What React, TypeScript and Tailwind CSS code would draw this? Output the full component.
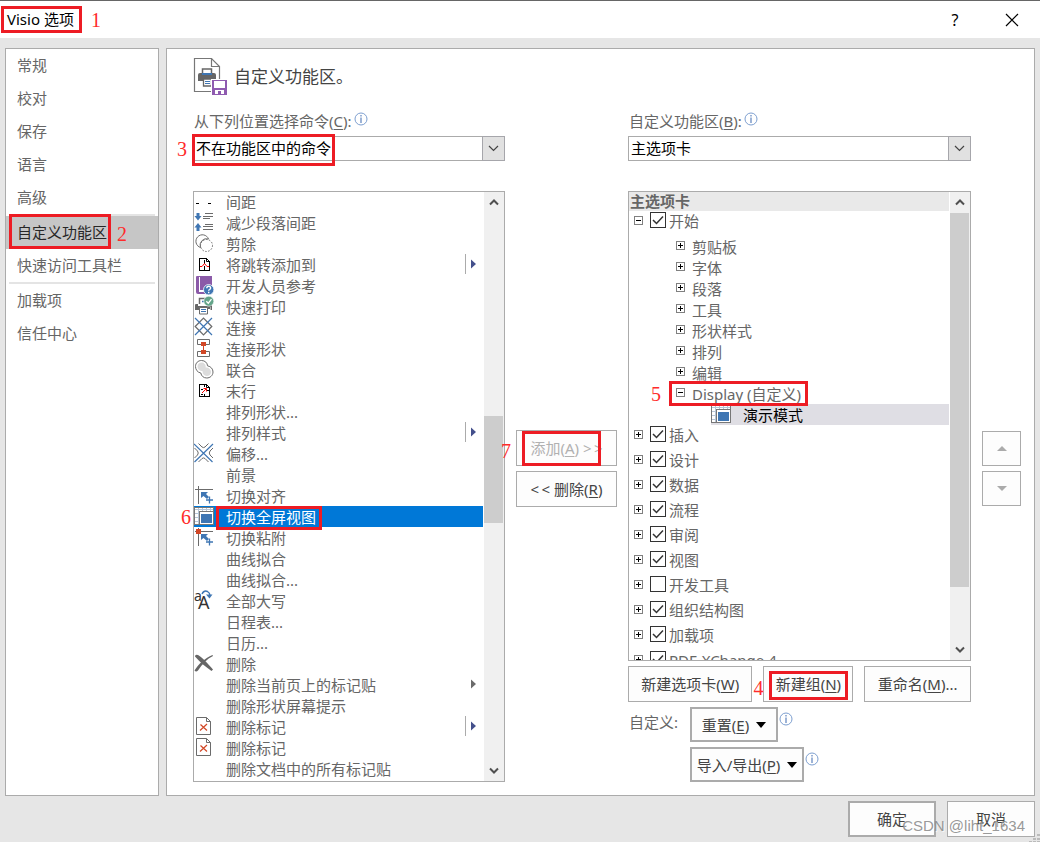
import React, { useState } from "react";

const GRAY = "#6b6b6b";
const BLUE = "#3f76b3";
const RED = "#d24726";

function Mark({ className }: { className: string }) {
  return <span aria-hidden="true" className={`pointer-events-none absolute z-10 border-3 border-[#ed1c24] ${className}`} />;
}

function Num({ n, className }: { n: number; className: string }) {
  return (
    <span
      className={`pointer-events-none absolute z-10 font-['Liberation_Serif',serif] text-[20px] leading-5 text-[#ff2b2b] ${className}`}
    >
      {n}
    </span>
  );
}

function Info() {
  return (
    <svg width="14" height="14" viewBox="0 0 14 14" className="shrink-0">
      <circle cx="7" cy="7" r="6" fill="#fff" stroke="#7d9fd0" strokeWidth="1" />
      <path d="M7 3v1.500M7 5.500v5.500" stroke="#5d82bd" strokeWidth="1.200" />
    </svg>
  );
}

function ScreenIcon() {
  return (
    <svg width="20" height="21" viewBox="0 0 20 21">
      <rect x="0" y="1" width="20" height="18" fill="#fff" />
      <path d="M4.500 2v16M8.500 2v4M12.500 2v4M16.500 2v4M1 3.500h18M1 7.500h4M1 11.500h4M1 15.500h4" stroke="#b7c6d8" fill="none" />
      <path d="M0.500 1v18M0 18.500h20M0 1.500h20M19.500 1v18" stroke="#777" fill="none" />
      <rect x="5.500" y="5.500" width="14" height="13" fill="#fff" stroke="#777" />
      <rect x="7" y="8" width="11" height="9" fill={BLUE} />
    </svg>
  );
}

function SnapArrow() {
  return (
    <>
      <path d="M1 4.500h18M4.500 1v18" stroke={GRAY} fill="none" />
      <path d="M7 7h7l-2 2 3 3-2 2-3.500-3-2.500 2z" fill={BLUE} />
      <path d="M15.500 11.500v7M12 15h7" stroke={BLUE} strokeWidth="1.300" />
    </>
  );
}

function BlackPage({ children }: { children: React.ReactNode }) {
  return (
    <>
      <path d="M5.500 4.500h7l3 3v9h-10z" fill="#fff" stroke="#000" shapeRendering="crispEdges" />
      <path d="M12.500 4.500v3h3" fill="none" stroke="#000" />
      {children}
    </>
  );
}

function Glyph({ kind }: { kind: string }) {
  const body = () => {
    switch (kind) {
      case "dash":
        return <path d="M2 12.500h3M14 12.500h3" stroke="#000" />;
      case "spacing":
        return (
          <>
            <path d="M2.500 1h3v3h2L4 8.500.500 4h2zM2.500 19h3v-3.500h2L4 11 .500 15.500h2z" fill={BLUE} />
            <path d="M11 1.500h8M9 4.500h10M9 6.500h7M11 12.500h8M9 14.500h10M9 17.500h10" stroke={GRAY} />
          </>
        );
      case "cut":
        return (
          <>
            <path d="M6.500 14.500A6.500 6.500 0 1 1 14.500 6A6.500 6.500 0 0 0 6.500 14.500z" fill="#fff" stroke={GRAY} />
            <circle cx="12.500" cy="12.500" r="6" fill="none" stroke={GRAY} strokeDasharray="1.500 1.500" />
          </>
        );
      case "jump":
        return (
          <BlackPage>
            <path d="M10.500 6v4M10.500 12v4" stroke="#000" />
            <path d="M6 12.500h2l2.500-3 2.500 3h2" stroke="#f00" fill="none" />
          </BlackPage>
        );
      case "line":
        return (
          <BlackPage>
            <path d="M7 9.500h2M7 14.500h2M10.500 5v2M10.500 14v2M13 10.500h2" stroke="#000" />
            <path d="M8 13l4-4M9.500 8.500h3v3" stroke="#f00" fill="none" />
          </BlackPage>
        );
      case "book":
        return (
          <>
            <path d="M2 2q0-1 1-1h15v14H5v2h7v2H4q-2 0-2-2z" fill="#8b5aa8" />
            <path d="M5.500 2v13" stroke="#fff" />
            <circle cx="14.700" cy="14.700" r="5.200" fill={BLUE} stroke="#fff" strokeWidth="0.800" />
            <path d="M12.800 13.200q0-1.900 1.900-1.900t1.900 1.600q0 1-1 1.600-.900.500-.900 1.300M14.700 16.800v1.400" fill="none" stroke="#fff" strokeWidth="1.400" />
          </>
        );
      case "print":
        return (
          <>
            <path d="M5.500 8V2.500h6V8" fill="#fff" stroke={GRAY} strokeWidth="1.500" />
            <path d="M8 5.500h4" stroke={BLUE} strokeWidth="1.500" />
            <path d="M1 9q0-1 1-1h2v2h10V8h3q1 0 1 1v5h-1.500v-3h-11v3H1z" fill="#666" />
            <path d="M3 10h13v3H3z" fill="#666" />
            <path d="M5.500 11.500h8v6.500h-8z" fill="#fff" stroke={GRAY} />
            <path d="M7 13.500h5M7 15.500h5" stroke={BLUE} />
            <circle cx="14.800" cy="5.200" r="5" fill="#63a489" stroke="#fff" strokeWidth="0.600" />
            <path d="M12.300 5.200l2 2 3.200-4" stroke="#fff" fill="none" strokeWidth="1.300" />
          </>
        );
      case "lattice":
        return (
          <>
            <path d="M1 5.500L5.250 1.250 14 9.500M1.200 9.500L9.500 1.200l8.300 8.300-8.300 8.300z" fill="none" stroke="none" />
            <path d="M1.200 9.500l4-4 4.300-4.300 4.300 4.300 4 4-4 4-4.300 4.300-4.300-4.300z" fill="none" stroke={GRAY} strokeWidth="1.200" />
            <path d="M1 1l17 17M18 1L1 18" stroke={BLUE} strokeWidth="1.200" />
          </>
        );
      case "connect":
        return (
          <>
            <path d="M3.500 1.500h12v5h-12zM3.500 13.500h12v5h-12z" fill="#fff" stroke={GRAY} />
            <path d="M9.500 5v10" stroke={RED} />
            <path d="M7 4h5v4H7zM7 12h5v4H7z" fill={RED} />
          </>
        );
      case "union":
        return (
          <>
            <path d="M7.500 1.500C11 1.500 13.500 4 13.500 6.800C17 7.500 19 10 19 13C19 16.500 16 19 12.800 19C9.500 19 7.300 17 6.800 14C3.500 13.500 1.500 10.500 1.500 7.500C1.500 4 4 1.500 7.500 1.500z" fill="#fff" stroke={GRAY} />
            <path d="M7.500 3.500C10 3.500 12 5.500 11.700 8.500C15 8.500 17 10.500 17 13C17 15.500 15 17 12.800 17C10 17 8.500 15 8.600 12.300C5.500 12 3.500 10 3.500 7.500C3.500 5 5.500 3.500 7.500 3.500z" fill="#dcdcdc" />
          </>
        );
      case "offset":
        return (
          <>
            <path d="M0 1l18.500 18M19 1L0.500 19" stroke={BLUE} strokeWidth="1.200" />
            <path d="M4.500 0.500l3.500 3.500q1.500 1.200 3 0L14.500 0.500M4.500 19l3.500-3.500q1.500-1.200 3 0l3.500 3.500M0.500 5l3 3q1.500 2 0 4l-3 3M19 5l-3 3q-1.500 2 0 4l3 3" fill="none" stroke={GRAY} />
          </>
        );
      case "snap":
        return <SnapArrow />;
      case "glue":
        return (
          <>
            <SnapArrow />
            <path d="M2 2h5v5H2z" fill={RED} />
          </>
        );
      case "caps":
        return (
          <>
            <text x="0" y="11" fontSize="14" fill="#333">a</text>
            <text x="4" y="19" fontSize="18" fill="#333">A</text>
            <path d="M8 4q2-4 5.500-2.500 2.500 1.500 2.500 4" fill="none" stroke={BLUE} strokeWidth="1.400" />
            <path d="M12 4.500h6.500L15.500 8.500z" fill={BLUE} />
          </>
        );
      case "delete":
        return (
          <path d="M1 3.500Q1 1 4 2C8 4.500 13 9.500 19 16.500L17.500 18C11 13.500 6 9 1 3.500zM19 3C13 6 8 11 4 17.500Q2 19.500.500 17.500C5 10.500 11 5 18.500 2z" fill="#666" />
        );
      case "xpage":
        return (
          <>
            <path d="M2.500 1.500h10l4 4v13h-14z" fill="#fff" stroke={GRAY} />
            <path d="M12.500 1.500v4h4" fill="none" stroke={GRAY} />
            <path d="M6.500 8.500l6.500 6M13 8l-7 6.500" stroke={RED} strokeWidth="1.200" />
          </>
        );
      default:
        return null;
    }
  };
  return (
    <svg width="20" height="21" viewBox="0 0 20 21" className="font-['Noto_Sans',sans-serif]">
      {body()}
    </svg>
  );
}

type Command = { text: string; icon?: string; sub?: "split" | "menu" };

const commands: Command[] = [
  { text: "间距", icon: "dash" },
  { text: "减少段落间距", icon: "spacing" },
  { text: "剪除", icon: "cut" },
  { text: "将跳转添加到", icon: "jump", sub: "split" },
  { text: "开发人员参考", icon: "book" },
  { text: "快速打印", icon: "print" },
  { text: "连接", icon: "lattice" },
  { text: "连接形状", icon: "connect" },
  { text: "联合", icon: "union" },
  { text: "末行", icon: "line" },
  { text: "排列形状..." },
  { text: "排列样式", sub: "split" },
  { text: "偏移...", icon: "offset" },
  { text: "前景" },
  { text: "切换对齐", icon: "snap" },
  { text: "切换全屏视图", icon: "screen" },
  { text: "切换粘附", icon: "glue" },
  { text: "曲线拟合" },
  { text: "曲线拟合..." },
  { text: "全部大写", icon: "caps" },
  { text: "日程表..." },
  { text: "日历..." },
  { text: "删除", icon: "delete" },
  { text: "删除当前页上的标记贴", sub: "menu" },
  { text: "删除形状屏幕提示" },
  { text: "删除标记", icon: "xpage", sub: "split" },
  { text: "删除标记", icon: "xpage" },
  { text: "删除文档中的所有标记贴" },
];

const groups = ["剪贴板", "字体", "段落", "工具", "形状样式", "排列", "编辑"];
const tabs = ["插入", "设计", "数据", "流程", "审阅", "视图", "开发工具", "组织结构图", "加载项", "PDF-XChange 4"];

function Scrollbar({ children }: { children: React.ReactNode }) {
  return (
    <div className="flex w-5 shrink-0 flex-col bg-[#f0f0f0] pr-px">
      <button aria-label="向上滚动" className="flex h-[21px] shrink-0 items-center justify-center">
        <svg width="10" height="7" viewBox="0 0 10 7"><path d="M1 5.500l4-4 4 4" fill="none" stroke="#505050" strokeWidth="2" /></svg>
      </button>
      <div className="flex min-h-0 flex-1 flex-col">{children}</div>
      <button aria-label="向下滚动" className="flex h-[21px] shrink-0 items-center justify-center">
        <svg width="10" height="7" viewBox="0 0 10 7"><path d="M1 1.500l4 4 4-4" fill="none" stroke="#505050" strokeWidth="2" /></svg>
      </button>
    </div>
  );
}

function Expander({ open }: { open?: boolean }) {
  return (
    <button aria-label={open ? "折叠" : "展开"} className="mt-[5px] block size-[9px] shrink-0">
      <svg width="9" height="9" viewBox="0 0 9 9">
        <rect x="0.500" y="0.500" width="8" height="8" fill="#fff" stroke="#808080" />
        <path d={open ? "M2 4.500h5" : "M2 4.500h5M4.500 2v5"} stroke="#000" />
      </svg>
    </button>
  );
}

function TabRow({ text, open }: { text: string; open?: boolean }) {
  const [on, setOn] = useState(text !== "开发工具");
  return (
    <div className="flex h-[25px] items-start pl-[5px]">
      <Expander open={open} />
      <label className="ml-[7px] flex items-start">
        <span className="relative mt-px block size-4">
          <input
            type="checkbox"
            checked={on}
            onChange={() => setOn(!on)}
            className="block size-4 appearance-none border border-[#333] bg-white"
          />
          {on && (
            <svg width="16" height="16" viewBox="0 0 16 16" className="pointer-events-none absolute inset-0">
              <path d="M3 8l3.500 3.500L13 4.500" fill="none" stroke="#333" strokeWidth="1.500" />
            </svg>
          )}
        </span>
        <span className="ml-[3px] leading-[21px] whitespace-nowrap">{text}</span>
      </label>
    </div>
  );
}

function Combo({ id, value }: { id: string; value: string }) {
  return (
    <div className="relative">
      <select id={id} className="block h-[25px] w-full appearance-none border border-[#ababab] bg-white pr-6 pb-[2px] pl-[2px] leading-5 text-black">
        <option>{value}</option>
      </select>
      <span className="pointer-events-none absolute inset-y-0 right-0 flex w-[23px] items-center justify-center border border-[#a6a6ab] bg-[#e1e1e1]">
        <svg width="11" height="7" viewBox="0 0 11 7"><path d="M1 1l4.500 4.500L10 1" fill="none" stroke="#444" strokeWidth="1.200" /></svg>
      </span>
    </div>
  );
}

function Btn({ children, className }: { children: React.ReactNode; className: string }) {
  return (
    <button className={`flex items-center justify-center border-[#ababab] bg-[#fdfdfd] whitespace-nowrap text-[#444] ${className}`}>
      {children}
    </button>
  );
}

function Key({ k }: { k: string }) {
  return <span>(<u className="underline-offset-2">{k}</u>)</span>;
}

function NavItem({ text, selected }: { text: string; selected?: boolean }) {
  return (
    <a
      href="#"
      className={selected ? "block bg-[#c6c6c6] pl-[11px] leading-[33px] text-[#262626]" : "block pl-[11px] leading-[33px]"}
    >
      {text}
    </a>
  );
}

export default function App() {
  return (
    <div className="flex min-h-screen flex-col bg-[#e6e6e6] font-['Noto_Sans','Noto_Sans_CJK_SC',sans-serif] text-[15px] leading-5 text-[#666]">
      <header className="flex h-[38px] items-center border-t border-[#666] bg-white pr-[21px] text-black">
        <div className="relative pl-[7px]">
          <h1 className="pb-[2px]">Visio 选项</h1>
          <Mark className="-top-[3px] left-px h-[27px] w-[81px]" />
          <Num n={1} className="top-px left-[91px]" />
        </div>
        <button aria-label="帮助" className="ml-auto w-5 text-[16px]">?</button>
        <button aria-label="关闭" className="ml-10">
          <svg width="14" height="14" viewBox="0 0 14 14"><path d="M1 1l12 12M13 1L1 13" stroke="#000" strokeWidth="1.200" /></svg>
        </button>
      </header>

      <div className="flex flex-1 gap-[7px] px-[5px] pt-[10px]">
        <nav className="relative w-[154px] shrink-0 border border-[#ababab] bg-white">
          <NavItem text="常规" />
          <NavItem text="校对" />
          <NavItem text="保存" />
          <NavItem text="语言" />
          <NavItem text="高级" />
          <hr className="mx-[3px] border-t-2 border-[#e4e4e4]" />
          <div className="relative">
            <NavItem text="自定义功能区" selected />
            <Mark className="-top-[2px] left-[3px] h-[35px] w-[102px]" />
            <Num n={2} className="top-2 left-[111px]" />
          </div>
          <NavItem text="快速访问工具栏" />
          <hr className="mx-[3px] border-t-2 border-[#e4e4e4]" />
          <NavItem text="加载项" />
          <NavItem text="信任中心" />
        </nav>

        <main className="min-w-0 flex-1 border border-[#ababab] bg-white pt-2 pr-[13px] pb-[13px] pl-[26px]">
          <div className="flex h-[52px] items-start gap-[5px]">
            <svg width="36" height="40" viewBox="0 0 36 40">
              <path d="M1.500 1.500h17l8 8v25h-25z" fill="#fff" stroke="#777" strokeWidth="1.200" />
              <path d="M18.500 1.500v8h8" fill="none" stroke="#777" strokeWidth="1.200" />
              <path d="M5 18q0-2 2-2h14q2 0 2 2v6H5z" fill="#666" />
              <path d="M9.500 18v-6h9v6z" fill="#fff" stroke="#666" strokeWidth="1.500" />
              <path d="M9 17h10" stroke={BLUE} strokeWidth="2" />
              <path d="M10.500 22h8v7h-8z" fill="#fff" stroke="#666" strokeWidth="1.300" />
              <path d="M12 24.500h5M12 26.500h5" stroke={BLUE} />
              <path d="M18 22h17v17H18z" fill="#fff" />
              <path d="M19 23h15v15H19z" fill="#8f5bb0" />
              <path d="M21 24h11v7H21z" fill="#fff" />
              <path d="M22 33h9v4h-9z" fill="#fff" />
              <path d="M25 34h3v3h-3z" fill="#8f5bb0" />
            </svg>
            <h2 className="mt-2 text-[17px] leading-6 text-[#444]">自定义功能区。</h2>
          </div>

          <div className="flex items-start gap-[11px] pt-[2px]">
            <section className="flex min-w-0 flex-[312_1_0px] flex-col">
              <div className="flex h-[25px] items-start gap-[2px]">
                <label htmlFor="source" className="pl-px whitespace-nowrap">从下列位置选择命令<Key k="C" />:</label>
                <span className="pt-px"><Info /></span>
              </div>
              <div className="relative">
                <Combo id="source" value="不在功能区中的命令" />
                <Mark className="-top-[2px] -left-px h-8 w-[143px]" />
                <Num n={3} className="top-[3px] -left-4" />
              </div>
              <div className="relative mt-[30px]">
                <div className="flex overflow-hidden border border-[#ababab] bg-white">
                  <ul role="listbox" aria-label="命令" className="-mt-px mr-px min-w-0 flex-1 pb-[2px]">
                    {commands.map((c, i) => {
                      const active = c.icon === "screen";
                      return (
                        <li
                          key={i}
                          role="option"
                          aria-selected={active}
                          className={`flex h-[21px] items-start ${active ? "bg-[#0078d7] text-white" : ""}`}
                        >
                          <span className="block h-[21px] w-8 shrink-0">
                            {active ? <ScreenIcon /> : c.icon && <Glyph kind={c.icon} />}
                          </span>
                          <span className="min-w-0 flex-1 leading-[23px] whitespace-nowrap">{c.text}</span>
                          {c.sub && (
                            <svg width="18" height="21" viewBox="0 0 18 21" className="shrink-0">
                              {c.sub === "split" && <path d="M0.500 0v20" stroke="#ababab" />}
                              <path d="M6 5.500v9l5-4.500z" fill={c.sub === "split" ? "#44508c" : GRAY} />
                            </svg>
                          )}
                        </li>
                      );
                    })}
                  </ul>
                  <Scrollbar>
                    <div className="flex-[203]" />
                    <div className="flex-[107] bg-[#cdcdcd]" />
                    <div className="flex-[237]" />
                  </Scrollbar>
                </div>
                <Mark className="top-[315px] left-[23px] h-6 w-[106px]" />
                <Num n={6} className="top-[316px] -left-3" />
              </div>
            </section>

            <div className="relative flex w-[101px] shrink-0 flex-col gap-[5px] pt-[319px]">
              <div className="relative">
                <Btn className="h-9 w-full border text-[#b1b1b1]!">添加<Key k="A" />&nbsp;&gt;&thinsp;&gt;</Btn>
                <Mark className="top-px left-[6px] h-[35px] w-[79px]" />
                <Num n={7} className="top-[11px] -left-[15px]" />
              </div>
              <Btn className="h-9 w-full border">&lt;&thinsp;&lt;&nbsp;删除<Key k="R" /></Btn>
            </div>

            <section className="flex min-w-0 flex-[343_1_0px] flex-col">
              <div className="flex h-[25px] items-start gap-[2px]">
                <label htmlFor="ribbon" className="pl-px whitespace-nowrap">自定义功能区<Key k="B" />:</label>
                <span className="pt-px"><Info /></span>
              </div>
              <Combo id="ribbon" value="主选项卡" />
              <div className="relative mt-[30px]">
                <div className="flex h-[470px] border border-[#ababab] bg-white">
                  <div className="mr-px min-w-0 flex-1 overflow-hidden">
                    <h3 className="h-[19px] bg-[#e9e9e9] pl-px leading-[19px] font-bold">主选项卡</h3>
                    <TabRow text="开始" open />
                    {groups.map((g) => (
                      <div key={g} className="flex h-[21px] items-start gap-[7px] pl-[47px]">
                        <Expander />
                        <span className="leading-[23px]">{g}</span>
                      </div>
                    ))}
                    <div className="flex h-[21px] items-start gap-[7px] pl-[47px]">
                      <Expander open />
                      <span className="leading-[23px]">Display (自定义)</span>
                    </div>
                    <div className="ml-[82px] flex h-[21px] items-start gap-3 bg-[#dfdee4] text-black">
                      <ScreenIcon />
                      <span className="leading-[23px]">演示模式</span>
                    </div>
                    {tabs.map((t) => (
                      <TabRow key={t} text={t} />
                    ))}
                  </div>
                  <Scrollbar>
                    <div className="flex-[374] bg-[#cdcdcd]" />
                    <div className="flex-[52]" />
                  </Scrollbar>
                </div>
                <Mark className="top-[190px] left-[41px] h-[25px] w-[139px]" />
                <Num n={5} className="top-[193px] left-[23px]" />
              </div>
              <div className="mt-[5px] flex gap-[11px]">
                <Btn className="h-9 flex-[124_1_0px] border">新建选项卡<Key k="W" /></Btn>
                <div className="relative flex-[91_1_0px]">
                  <Btn className="h-9 w-full border">新建组<Key k="N" /></Btn>
                  <Mark className="top-[5px] left-[6px] h-[29px] w-[79px]" />
                  <Num n={4} className="top-3 -left-[10px]" />
                </div>
                <Btn className="h-9 flex-[106_1_0px] border">重命名<Key k="M" />...</Btn>
              </div>
              <div className="mt-[5px] flex">
                <span className="w-[62px] shrink-0 pt-[5px] pl-px">自定义:</span>
                <div className="flex flex-col gap-[5px]">
                  <div className="flex items-start gap-px">
                    <Btn className="h-[35px] w-[88px] gap-[7px] border-2">
                      <span>重置<Key k="E" /></span>
                      <svg width="10" height="6" viewBox="0 0 10 6"><path d="M0 0h10L5 6z" fill="#000" /></svg>
                    </Btn>
                    <span className="pt-[5px]"><Info /></span>
                  </div>
                  <div className="flex items-start gap-px">
                    <Btn className="h-[35px] w-[114px] gap-[7px] border-2">
                      <span>导入/导出<Key k="P" /></span>
                      <svg width="10" height="6" viewBox="0 0 10 6"><path d="M0 0h10L5 6z" fill="#000" /></svg>
                    </Btn>
                    <span className="pt-[5px]"><Info /></span>
                  </div>
                </div>
              </div>
            </section>

            <div className="flex w-[39px] shrink-0 flex-col gap-[5px] pt-[320px]">
              <button aria-label="上移" className="flex h-[35px] items-center justify-center border border-[#ababab] bg-[#fdfdfd]">
                <svg width="10" height="5" viewBox="0 0 10 5"><path d="M0 5h10L5 0z" fill="#ababab" /></svg>
              </button>
              <button aria-label="下移" className="flex h-[35px] items-center justify-center border border-[#ababab] bg-[#fdfdfd]">
                <svg width="10" height="5" viewBox="0 0 10 5"><path d="M0 0h10L5 5z" fill="#ababab" /></svg>
              </button>
            </div>
          </div>
        </main>
      </div>

      <footer className="relative flex justify-end gap-[11px] px-[5px] pt-[5px] pb-[5px]">
        <Btn className="h-9 w-[88px] border-2">确定</Btn>
        <Btn className="h-9 w-[88px] border">取消</Btn>
        <span className="pointer-events-none absolute right-[15px] bottom-[6px] font-['Liberation_Sans',sans-serif] text-[15px] text-[#8c8c8c]/90 [text-shadow:1px_1px_0_#ffffffb0]">
          CSDN @liht_1634
        </span>
        <svg width="11" height="8" viewBox="0 0 11 8" className="absolute right-0 bottom-0">
          <path d="M8 0h3v2H8zM4 4h3v2H4zM8 4h3v2H8zM0 7h3v1H0zM4 7h3v1H4zM8 7h3v1H8z" fill="#bbb" />
        </svg>
      </footer>
    </div>
  );
}
